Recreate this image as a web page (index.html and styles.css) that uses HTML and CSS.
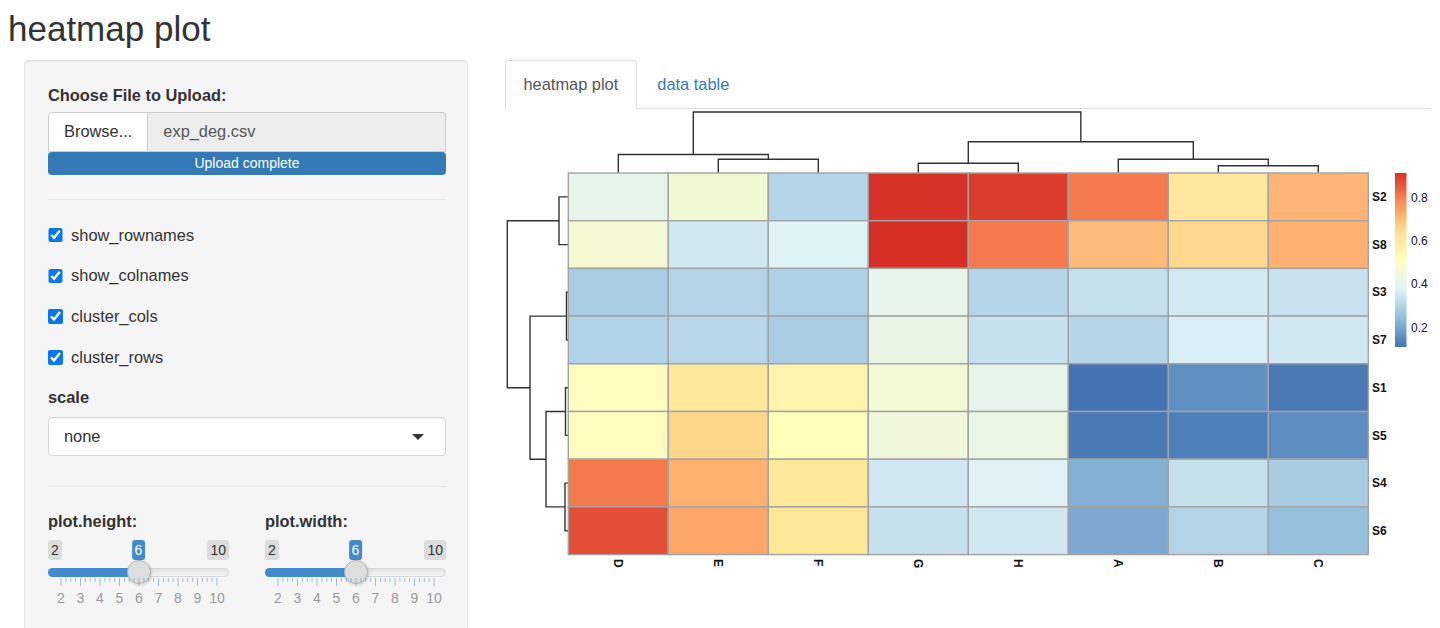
FILE: index.html
```html
<!DOCTYPE html>
<html lang="en">
<head>
    <meta charset="UTF-8">
    <meta name="viewport" content="width=device-width, initial-scale=1.0">
    <title>heatmap plot</title>
    <link rel="stylesheet" href="styles.css">
</head>
<body>
    <h2 class="page-title">heatmap plot</h2>

    <div class="layout">
        <div class="well">
            <label class="control-label">Choose File to Upload:</label>
            <div class="file-input">
                <span class="browse-btn">Browse...</span>
                <span class="file-name">exp_deg.csv</span>
            </div>
            <div class="progress">Upload complete</div>

            <div class="divider first"></div>

            <label class="check-row"><input type="checkbox" checked> show_rownames</label>
            <label class="check-row"><input type="checkbox" checked> show_colnames</label>
            <label class="check-row"><input type="checkbox" checked> cluster_cols</label>
            <label class="check-row"><input type="checkbox" checked> cluster_rows</label>

            <label class="control-label scale-label">scale</label>
            <div class="select-box">
                <span>none</span>
                <span class="caret"></span>
            </div>

            <div class="divider second"></div>

            <div class="slider-row">
                <div class="slider-col">
                    <label class="control-label slider-label">plot.height:</label>
                    <div class="slider">
                        <span class="irs-min">2</span>
                        <span class="irs-max">10</span>
                        <span class="irs-line"></span>
                        <span class="irs-bar" style="width: 91px"></span>
                        <span class="irs-single" style="left: 91px">6</span>
                        <span class="irs-handle" style="left: 91px"></span>
                        <svg class="irs-grid" width="181" height="30" viewBox="0 0 181 30">
                            <path class="pol" d="M13 0v8M32.5 0v8M52 0v8M71.5 0v8M91 0v8M110.5 0v8M130 0v8M149.5 0v8M169 0v8"/>
                            <path class="pol small" d="M17.9 0v4M22.75 0v4M27.6 0v4M37.4 0v4M42.25 0v4M47.1 0v4M56.9 0v4M61.75 0v4M66.6 0v4M76.4 0v4M81.25 0v4M86.1 0v4M95.9 0v4M100.75 0v4M105.6 0v4M115.4 0v4M120.25 0v4M125.1 0v4M134.9 0v4M139.75 0v4M144.6 0v4M154.4 0v4M159.25 0v4M164.1 0v4"/>
                            <g class="grid-text">
                                <text x="13" y="25">2</text>
                                <text x="32.5" y="25">3</text>
                                <text x="52" y="25">4</text>
                                <text x="71.5" y="25">5</text>
                                <text x="91" y="25">6</text>
                                <text x="110.5" y="25">7</text>
                                <text x="130" y="25">8</text>
                                <text x="149.5" y="25">9</text>
                                <text x="169" y="25">10</text>
                            </g>
                        </svg>
                    </div>
                </div>
                <div class="slider-col">
                    <label class="control-label slider-label">plot.width:</label>
                    <div class="slider">
                        <span class="irs-min">2</span>
                        <span class="irs-max">10</span>
                        <span class="irs-line"></span>
                        <span class="irs-bar" style="width: 91px"></span>
                        <span class="irs-single" style="left: 91px">6</span>
                        <span class="irs-handle" style="left: 91px"></span>
                        <svg class="irs-grid" width="181" height="30" viewBox="0 0 181 30">
                            <path class="pol" d="M13 0v8M32.5 0v8M52 0v8M71.5 0v8M91 0v8M110.5 0v8M130 0v8M149.5 0v8M169 0v8"/>
                            <path class="pol small" d="M17.9 0v4M22.75 0v4M27.6 0v4M37.4 0v4M42.25 0v4M47.1 0v4M56.9 0v4M61.75 0v4M66.6 0v4M76.4 0v4M81.25 0v4M86.1 0v4M95.9 0v4M100.75 0v4M105.6 0v4M115.4 0v4M120.25 0v4M125.1 0v4M134.9 0v4M139.75 0v4M144.6 0v4M154.4 0v4M159.25 0v4M164.1 0v4"/>
                            <g class="grid-text">
                                <text x="13" y="25">2</text>
                                <text x="32.5" y="25">3</text>
                                <text x="52" y="25">4</text>
                                <text x="71.5" y="25">5</text>
                                <text x="91" y="25">6</text>
                                <text x="110.5" y="25">7</text>
                                <text x="130" y="25">8</text>
                                <text x="149.5" y="25">9</text>
                                <text x="169" y="25">10</text>
                            </g>
                        </svg>
                    </div>
                </div>
            </div>
        </div>

        <div class="main">
            <ul class="tabs">
                <li class="tab active">heatmap plot</li>
                <li class="tab">data table</li>
            </ul>

            <!-- pheatmap output: columns D..C, rows S2..S6 -->
            <svg class="heatmap" width="925" height="519" viewBox="505 109 925 519">
                <defs>
                    <linearGradient id="rdylbu" x1="0" y1="0" x2="0" y2="1">
                        <stop offset="0" stop-color="#d73027"/>
                        <stop offset="0.1667" stop-color="#fc8d59"/>
                        <stop offset="0.3333" stop-color="#fee090"/>
                        <stop offset="0.5" stop-color="#ffffbf"/>
                        <stop offset="0.6667" stop-color="#e0f3f8"/>
                        <stop offset="0.8333" stop-color="#91bfdb"/>
                        <stop offset="1" stop-color="#4575b4"/>
                    </linearGradient>
                </defs>

                <g class="dendro">
                    <path d="M693.3 154.5V112H1080.8V141.7"/>
                    <path d="M618.3 173V154.5H768.3V159.3"/>
                    <path d="M718.3 173V159.3H818.3V173"/>
                    <path d="M968.3 163.3V141.7H1193.3V159.3"/>
                    <path d="M918.3 173V163.3H1018.3V173"/>
                    <path d="M1118.3 173V159.3H1268.3V165.7"/>
                    <path d="M1218.3 173V165.7H1318.3V173"/>

                    <path d="M568.3 196.9H559V244.6H568.3"/>
                    <path d="M568.3 292.3H566.5V340H568.3"/>
                    <path d="M568.3 387.7H565.5V435.4H568.3"/>
                    <path d="M568.3 483.1H565V530.7H568.3"/>
                    <path d="M565.5 411.5H546V506.9H565"/>
                    <path d="M566.5 316.1H530V459.2H546"/>
                    <path d="M559 220.7H507.3V387.7H530"/>
                </g>

                <g class="cells">
                    <g transform="translate(0,173)">
                        <rect x="568.3" width="100" height="47.7" fill="#e7f4ea"/>
                        <rect x="668.3" width="100" height="47.7" fill="#f1f9d3"/>
                        <rect x="768.3" width="100" height="47.7" fill="#b4d5e8"/>
                        <rect x="868.3" width="100" height="47.7" fill="#d73229"/>
                        <rect x="968.3" width="100" height="47.7" fill="#dc3e2e"/>
                        <rect x="1068.3" width="100" height="47.7" fill="#f47b4f"/>
                        <rect x="1168.3" width="100" height="47.7" fill="#fee79c"/>
                        <rect x="1268.3" width="100" height="47.7" fill="#fdb474"/>
                    </g>
                    <g transform="translate(0,220.7)">
                        <rect x="568.3" width="100" height="47.7" fill="#f4f9d4"/>
                        <rect x="668.3" width="100" height="47.7" fill="#d1e8f2"/>
                        <rect x="768.3" width="100" height="47.7" fill="#dff2f5"/>
                        <rect x="868.3" width="100" height="47.7" fill="#d62f26"/>
                        <rect x="968.3" width="100" height="47.7" fill="#f47a4e"/>
                        <rect x="1068.3" width="100" height="47.7" fill="#fdbb79"/>
                        <rect x="1168.3" width="100" height="47.7" fill="#fed88c"/>
                        <rect x="1268.3" width="100" height="47.7" fill="#fdb070"/>
                    </g>
                    <g transform="translate(0,268.4)">
                        <rect x="568.3" width="100" height="47.7" fill="#a9cde3"/>
                        <rect x="668.3" width="100" height="47.7" fill="#b4d5e8"/>
                        <rect x="768.3" width="100" height="47.7" fill="#aed1e5"/>
                        <rect x="868.3" width="100" height="47.7" fill="#e6f4ea"/>
                        <rect x="968.3" width="100" height="47.7" fill="#b4d5e8"/>
                        <rect x="1068.3" width="100" height="47.7" fill="#c5e1ed"/>
                        <rect x="1168.3" width="100" height="47.7" fill="#d2e9f2"/>
                        <rect x="1268.3" width="100" height="47.7" fill="#c8e1ee"/>
                    </g>
                    <g transform="translate(0,316.1)">
                        <rect x="568.3" width="100" height="47.7" fill="#b1d3e7"/>
                        <rect x="668.3" width="100" height="47.7" fill="#b7d7e9"/>
                        <rect x="768.3" width="100" height="47.7" fill="#a9cde3"/>
                        <rect x="868.3" width="100" height="47.7" fill="#e9f5e4"/>
                        <rect x="968.3" width="100" height="47.7" fill="#c4e1ed"/>
                        <rect x="1068.3" width="100" height="47.7" fill="#b5d6e8"/>
                        <rect x="1168.3" width="100" height="47.7" fill="#daeef5"/>
                        <rect x="1268.3" width="100" height="47.7" fill="#d0e8f2"/>
                    </g>
                    <g transform="translate(0,363.8)">
                        <rect x="568.3" width="100" height="47.7" fill="#fefcbf"/>
                        <rect x="668.3" width="100" height="47.7" fill="#fee89c"/>
                        <rect x="768.3" width="100" height="47.7" fill="#fef4ae"/>
                        <rect x="868.3" width="100" height="47.7" fill="#f2f9d5"/>
                        <rect x="968.3" width="100" height="47.7" fill="#e7f4ea"/>
                        <rect x="1068.3" width="100" height="47.7" fill="#4474b3"/>
                        <rect x="1168.3" width="100" height="47.7" fill="#5f90c2"/>
                        <rect x="1268.3" width="100" height="47.7" fill="#4a7ab6"/>
                    </g>
                    <g transform="translate(0,411.5)">
                        <rect x="568.3" width="100" height="47.7" fill="#fefcbf"/>
                        <rect x="668.3" width="100" height="47.7" fill="#fed78b"/>
                        <rect x="768.3" width="100" height="47.7" fill="#ffffb9"/>
                        <rect x="868.3" width="100" height="47.7" fill="#eff7dc"/>
                        <rect x="968.3" width="100" height="47.7" fill="#eaf6e3"/>
                        <rect x="1068.3" width="100" height="47.7" fill="#4a7bb6"/>
                        <rect x="1168.3" width="100" height="47.7" fill="#4e81bb"/>
                        <rect x="1268.3" width="100" height="47.7" fill="#5c8ec2"/>
                    </g>
                    <g transform="translate(0,459.2)">
                        <rect x="568.3" width="100" height="47.7" fill="#f47a4c"/>
                        <rect x="668.3" width="100" height="47.7" fill="#fdb16f"/>
                        <rect x="768.3" width="100" height="47.7" fill="#fee89a"/>
                        <rect x="868.3" width="100" height="47.7" fill="#d1e8f2"/>
                        <rect x="968.3" width="100" height="47.7" fill="#e0f2f6"/>
                        <rect x="1068.3" width="100" height="47.7" fill="#84b0d4"/>
                        <rect x="1168.3" width="100" height="47.7" fill="#c4e1ec"/>
                        <rect x="1268.3" width="100" height="47.7" fill="#a8cde2"/>
                    </g>
                    <g transform="translate(0,506.9)">
                        <rect x="568.3" width="100" height="47.7" fill="#e44f36"/>
                        <rect x="668.3" width="100" height="47.7" fill="#fca769"/>
                        <rect x="768.3" width="100" height="47.7" fill="#fee697"/>
                        <rect x="868.3" width="100" height="47.7" fill="#c4e1ed"/>
                        <rect x="968.3" width="100" height="47.7" fill="#d1e8f2"/>
                        <rect x="1068.3" width="100" height="47.7" fill="#7ea8cf"/>
                        <rect x="1168.3" width="100" height="47.7" fill="#b3d4e7"/>
                        <rect x="1268.3" width="100" height="47.7" fill="#95c1dc"/>
                    </g>
                </g>

                <g class="row-names">
                    <text x="1372" y="201">S2</text>
                    <text x="1372" y="248.7">S8</text>
                    <text x="1372" y="296.4">S3</text>
                    <text x="1372" y="344.1">S7</text>
                    <text x="1372" y="391.8">S1</text>
                    <text x="1372" y="439.5">S5</text>
                    <text x="1372" y="487.2">S4</text>
                    <text x="1372" y="534.9">S6</text>
                </g>

                <g class="col-names">
                    <text transform="translate(614,559) rotate(90)">D</text>
                    <text transform="translate(714,559) rotate(90)">E</text>
                    <text transform="translate(814,559) rotate(90)">F</text>
                    <text transform="translate(914,559) rotate(90)">G</text>
                    <text transform="translate(1014,559) rotate(90)">H</text>
                    <text transform="translate(1114,559) rotate(90)">A</text>
                    <text transform="translate(1214,559) rotate(90)">B</text>
                    <text transform="translate(1314,559) rotate(90)">C</text>
                </g>

                <rect class="legend-bar" x="1395" y="173" width="11.5" height="174" fill="url(#rdylbu)"/>
                <g class="legend-text">
                    <text x="1411" y="202">0.8</text>
                    <text x="1411" y="245">0.6</text>
                    <text x="1411" y="288">0.4</text>
                    <text x="1411" y="332">0.2</text>
                </g>
            </svg>
        </div>
    </div>
</body>
</html>
```

FILE: styles.css
```css
html, body {
    overflow: hidden;
}
body {
    margin: 0;
    font-family: "Liberation Sans", Arial, sans-serif;
    font-size: 16.4px;
    line-height: 23.4px;
    color: #333;
    background-color: #fff;
}
.page-title {
    margin: 10px 0 11.5px 8px;
    font-size: 35px;
    font-weight: normal;
    line-height: 38.5px;
}
.layout {
    display: flex;
    gap: 37px;
    padding: 0 10px 0 24px;
}

/* sidebar */
.well {
    width: 444px;
    flex: none;
    box-sizing: border-box;
    padding: 23px 21px 24px 23px;
    background-color: #f5f5f5;
    border: 1px solid #e3e3e3;
    border-radius: 4px;
    box-shadow: inset 0 1px 1px rgba(0, 0, 0, 0.05);
}
.control-label {
    display: block;
    font-weight: bold;
    margin-bottom: 4.6px;
}
.file-input {
    display: flex;
    height: 40px;
}
.browse-btn,
.file-name {
    display: flex;
    align-items: center;
    box-sizing: border-box;
    padding: 0 15px;
    border: 1px solid #ccc;
}
.browse-btn {
    background: #fff;
    border-radius: 4px 0 0 0;
}
.file-name {
    flex: 1;
    border-left: none;
    background: #eee;
    color: #555;
    border-radius: 0 4px 0 0;
}
.progress {
    height: 23px;
    line-height: 23px;
    background-color: #337ab7;
    border-radius: 4px;
    color: #fff;
    font-size: 14px;
    text-align: center;
}
.divider {
    border-top: 1px solid #e8e8e8;
}
.divider.first {
    margin: 23.5px 0 24px;
}
.divider.second {
    margin: 30px 0 23.5px;
}
.check-row {
    display: flex;
    align-items: center;
    gap: 8.5px;
    height: 23.4px;
    margin-bottom: 17.3px;
}
.check-row input {
    width: 14.6px;
    height: 14.6px;
    margin: 0;
    accent-color: #0b75f0;
}
.scale-label {
    margin-bottom: 7.6px;
}
.select-box {
    display: flex;
    align-items: center;
    justify-content: space-between;
    box-sizing: border-box;
    height: 38.7px;
    padding: 0 21px 0 15px;
    background: #fff;
    border: 1px solid #d6d6d6;
    border-radius: 4px;
    box-shadow: inset 0 1px 1px rgba(0, 0, 0, 0.06);
}
.caret {
    width: 0;
    height: 0;
    border-left: 6px solid transparent;
    border-right: 6px solid transparent;
    border-top: 6px solid #333;
}

/* range sliders */
.slider-row {
    display: flex;
    gap: 36px;
}
.slider-col {
    width: 181px;
}
.slider-label {
    margin-bottom: 6px;
}
.slider {
    position: relative;
    height: 72px;
}
.irs-min,
.irs-max,
.irs-single {
    position: absolute;
    top: 0;
    height: 20px;
    line-height: 21px;
    padding: 0 3px;
    font-size: 14px;
    border-radius: 3px;
}
.irs-min {
    left: 0;
    background: #dcdcdc;
}
.irs-max {
    right: 0;
    background: #dcdcdc;
}
.irs-single {
    transform: translateX(-50%);
    background: #428bca;
    color: #fff;
    margin-left: -0.5px;
}
.irs-line {
    position: absolute;
    top: 28px;
    left: 0;
    right: 0;
    height: 9.5px;
    box-sizing: border-box;
    background: linear-gradient(#e3e3e3, #f4f4f4);
    border: 1px solid #d8d8d8;
    border-radius: 8px;
}
.irs-bar {
    position: absolute;
    top: 28px;
    left: 0;
    height: 9.5px;
    background: #428bca;
    border-radius: 8px 0 0 8px;
}
.irs-handle {
    position: absolute;
    top: 20px;
    width: 24px;
    height: 24px;
    margin-left: -12px;
    box-sizing: border-box;
    background: #dedede;
    border: 1px solid #b4b4b4;
    border-radius: 50%;
    box-shadow: 1px 1px 3px rgba(0, 0, 0, 0.15);
}
.irs-grid {
    position: absolute;
    top: 38px;
    left: 0;
}
.pol {
    stroke: #428bca;
    stroke-opacity: 0.5;
    stroke-width: 1;
    fill: none;
}
.grid-text text {
    font-family: "Liberation Sans", Arial, sans-serif;
    font-size: 14px;
    fill: #999;
    text-anchor: middle;
}

/* main panel */
.main {
    flex: 1;
    min-width: 0;
}
.tabs {
    display: flex;
    gap: 2px;
    margin: 0;
    padding: 0;
    list-style: none;
    border-bottom: 1px solid #ddd;
}
.tab {
    padding: 11.8px 17.5px;
    margin-bottom: -1px;
    border: 1px solid transparent;
    border-radius: 4px 4px 0 0;
    color: #337ab7;
}
.tab.active {
    color: #555;
    background: #fff;
    border-color: #ddd #ddd transparent;
}
.heatmap {
    display: block;
}
.dendro path {
    fill: none;
    stroke: #333;
    stroke-width: 1.4;
}
.cells rect {
    stroke: #a3a3a3;
    stroke-width: 1.4;
}
.row-names text,
.col-names text,
.legend-text text {
    font-family: "Liberation Sans", Arial, sans-serif;
    font-size: 12px;
    fill: #111;
}
.row-names text,
.col-names text {
    font-weight: bold;
}
```
